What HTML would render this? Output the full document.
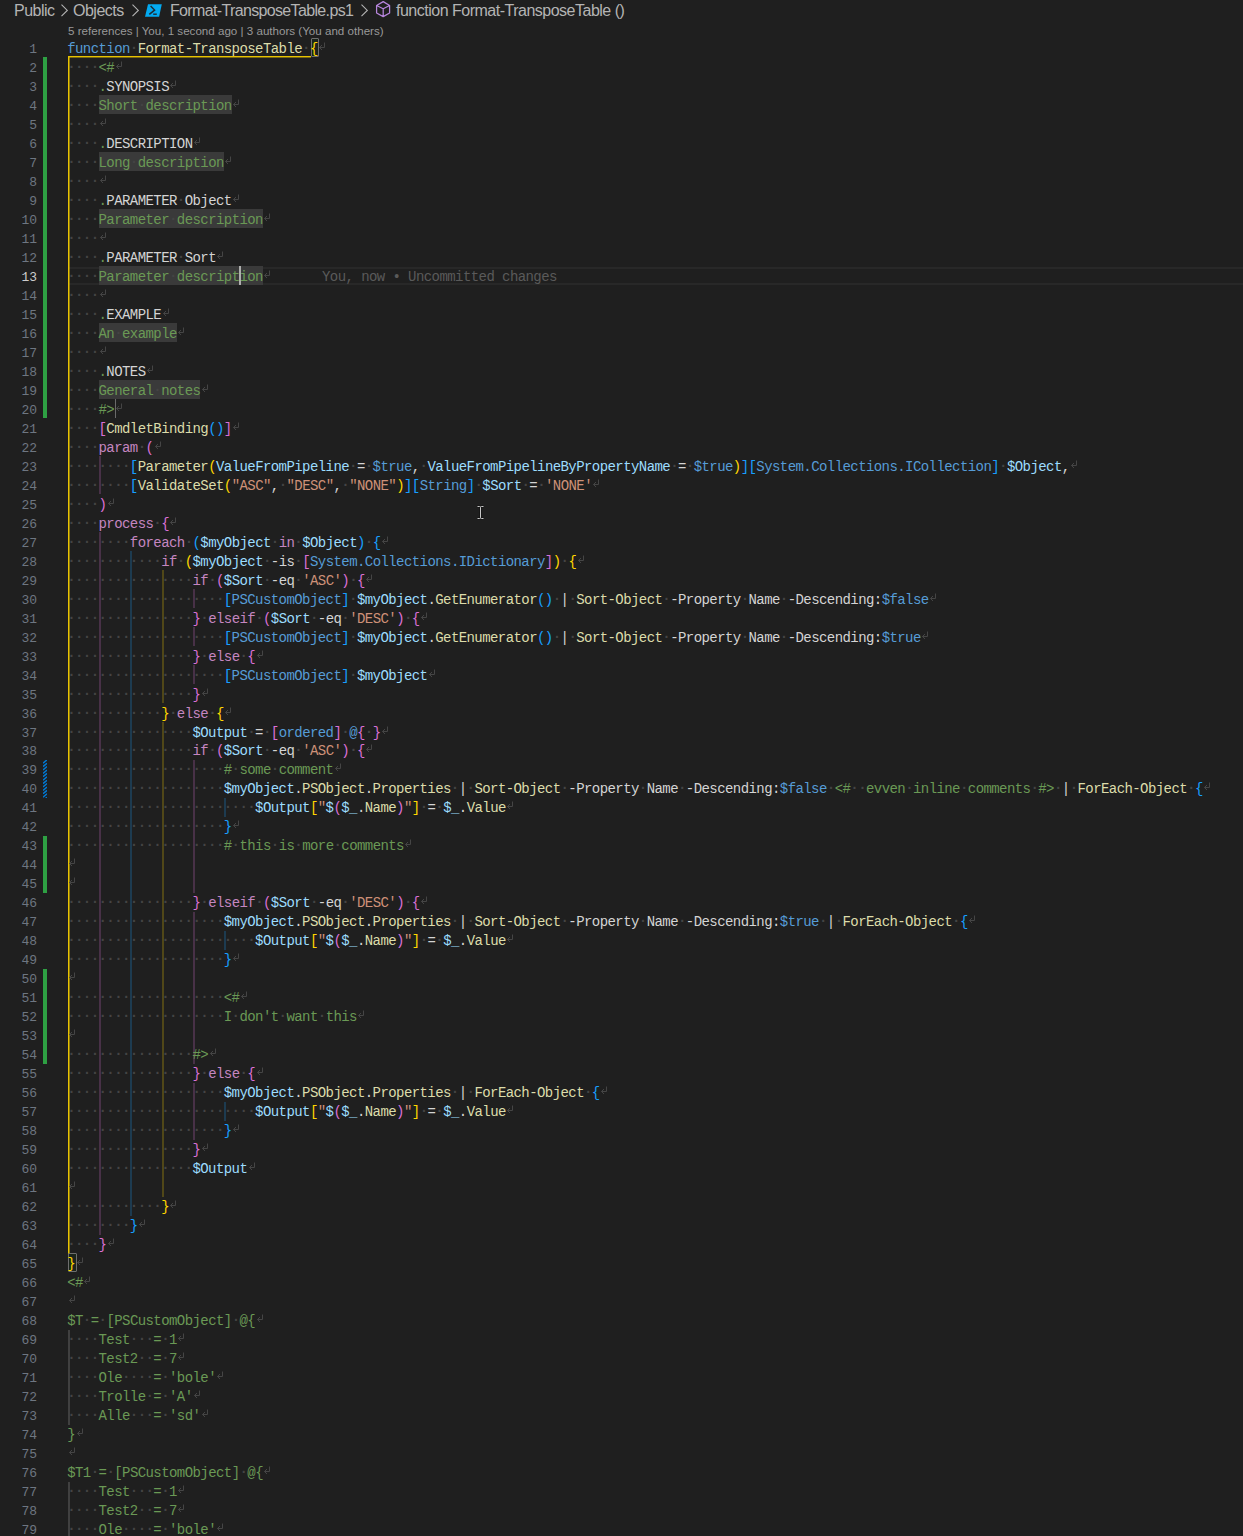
<!DOCTYPE html><html><head><meta charset="utf-8"><style>
html,body{margin:0;padding:0;background:#1F1F1F;width:1243px;height:1536px;overflow:hidden;position:relative}
body{font-family:"Liberation Mono",monospace}
.bc{position:absolute;top:0;left:0;height:22px;font-family:"Liberation Sans",sans-serif;font-size:16px;letter-spacing:-0.5px;color:#B4B4B4;white-space:pre}
.bc span{position:absolute;top:2px}
.bc svg{position:absolute}
.lens{position:absolute;top:23px;left:68px;font-family:"Liberation Sans",sans-serif;font-size:11.6px;color:#999999;white-space:pre;line-height:16px}
.ln{position:absolute;left:0;width:37px;text-align:right;font-size:13px;line-height:19px;height:19px;color:#6E7681;letter-spacing:0px;padding-top:2px;box-sizing:border-box}
.ln.act{color:#CCCCCC}
.g{position:absolute;left:43px;width:4px}
.g.add{background:#2EA043}
.gm{position:absolute;left:43px}
.g.mod{background:repeating-linear-gradient(-45deg,#0078D4 0px,#0078D4 1.5px,#1F1F1F 1.5px,#1F1F1F 2.4px)}
.cur{position:absolute;left:68px;right:0;height:18px;box-sizing:border-box;border-top:2px solid #282828;border-bottom:2px solid #282828}
.hl{position:absolute;height:19px;background:#3A3A3A}
.gd{position:absolute;width:2px}
.gda{position:absolute;left:68px;width:2px;background:linear-gradient(90deg,#E8C300 0,#E8C300 1px,rgba(232,195,0,0.55) 1px)}
.gdh{position:absolute;left:68px;height:2px;background:linear-gradient(180deg,#E8C300 0,#E8C300 1px,rgba(232,195,0,0.45) 1px)}
.bm{position:absolute;height:19px;box-sizing:border-box;border:1px solid #6E6E6E;border-radius:1px;background:rgba(0,100,0,0.1)}
.l{position:absolute;left:67.2px;height:19px;line-height:19px;font-size:14px;white-space:pre;letter-spacing:-0.5728px;padding-top:2px;box-sizing:border-box;color:#D4D4D4}
.l s,.l b,.l i{text-decoration:none;font-weight:normal;font-style:normal}
.l i{color:#444444;position:relative;top:-1px;font-weight:bold !important}
.kw{color:#C586C0}.fn{color:#569CD6}.name{color:#DCDCAA}.var{color:#9CDCFE}.const{color:#569CD6}
.str{color:#CE9178}.com{color:#6A9955}.type{color:#569CD6}.df{color:#D4D4D4}.attr{color:#DCDCAA}.mem{color:#DCDCAA}.prop{color:#9CDCFE}
.eol{position:absolute;fill:none;stroke:#454545;stroke-width:1}
.blame{position:absolute;height:19px;line-height:19px;font-size:14px;letter-spacing:-0.5728px;color:#5A5A5A;white-space:pre;padding-top:2px;box-sizing:border-box}
.caret{position:absolute;width:2px;height:19px;background:#AEAFAD}
.ibeam{position:absolute}
.caret2{position:absolute;width:1px;height:19px;background:#6A6A6A}
</style></head><body><div class="bc">
<span style="left:14px">Public</span>
<svg style="left:60px;top:3px" width="10" height="15"><path d="M1.5 1.6L7.3 7.4L1.5 13.1" stroke="#B4B4B4" stroke-width="1.1" fill="none"/></svg>
<span style="left:73px">Objects</span>
<svg style="left:131px;top:3px" width="10" height="15"><path d="M1.5 1.6L7.3 7.4L1.5 13.1" stroke="#B4B4B4" stroke-width="1.1" fill="none"/></svg>
<svg style="left:144px;top:4px" width="19" height="13"><path d="M4 0.2H17.8L15.1 12.7H1Z" fill="#03A9F0"/><path d="M6.6 1.9L10.6 6.1L5.3 10.4" stroke="#1F2A33" stroke-width="1.5" fill="none"/><path d="M9.2 10.2H12.8" stroke="#1F2A33" stroke-width="1.4"/></svg>
<span style="left:170px;letter-spacing:-0.65px">Format-TransposeTable.ps1</span>
<svg style="left:360px;top:3px" width="10" height="15"><path d="M1.5 1.6L7.3 7.4L1.5 13.1" stroke="#B4B4B4" stroke-width="1.1" fill="none"/></svg>
<svg style="left:375px;top:0px" width="17" height="19"><path d="M8.2 1.6L14.6 5.5V13L8.2 16.6L1.6 13V5.5Z M1.6 5.5L8.2 8.8L14.6 5.5 M8.2 8.8V16.6" stroke="#B886DE" stroke-width="1.25" fill="none" stroke-linejoin="round"/></svg>
<span style="left:396px">function Format-TransposeTable ()</span>
</div>
<div class="lens">5 references | You, 1 second ago | 3 authors (You and others)</div>
<div class="ln" style="top:38px">1</div>
<div class="ln" style="top:57px">2</div>
<div class="ln" style="top:76px">3</div>
<div class="ln" style="top:95px">4</div>
<div class="ln" style="top:114px">5</div>
<div class="ln" style="top:133px">6</div>
<div class="ln" style="top:152px">7</div>
<div class="ln" style="top:171px">8</div>
<div class="ln" style="top:190px">9</div>
<div class="ln" style="top:209px">10</div>
<div class="ln" style="top:228px">11</div>
<div class="ln" style="top:247px">12</div>
<div class="ln act" style="top:266px">13</div>
<div class="ln" style="top:285px">14</div>
<div class="ln" style="top:304px">15</div>
<div class="ln" style="top:323px">16</div>
<div class="ln" style="top:342px">17</div>
<div class="ln" style="top:361px">18</div>
<div class="ln" style="top:380px">19</div>
<div class="ln" style="top:399px">20</div>
<div class="ln" style="top:418px">21</div>
<div class="ln" style="top:437px">22</div>
<div class="ln" style="top:456px">23</div>
<div class="ln" style="top:475px">24</div>
<div class="ln" style="top:494px">25</div>
<div class="ln" style="top:513px">26</div>
<div class="ln" style="top:532px">27</div>
<div class="ln" style="top:551px">28</div>
<div class="ln" style="top:570px">29</div>
<div class="ln" style="top:589px">30</div>
<div class="ln" style="top:608px">31</div>
<div class="ln" style="top:627px">32</div>
<div class="ln" style="top:646px">33</div>
<div class="ln" style="top:665px">34</div>
<div class="ln" style="top:684px">35</div>
<div class="ln" style="top:703px">36</div>
<div class="ln" style="top:722px">37</div>
<div class="ln" style="top:740px">38</div>
<div class="ln" style="top:759px">39</div>
<div class="ln" style="top:778px">40</div>
<div class="ln" style="top:797px">41</div>
<div class="ln" style="top:816px">42</div>
<div class="ln" style="top:835px">43</div>
<div class="ln" style="top:854px">44</div>
<div class="ln" style="top:873px">45</div>
<div class="ln" style="top:892px">46</div>
<div class="ln" style="top:911px">47</div>
<div class="ln" style="top:930px">48</div>
<div class="ln" style="top:949px">49</div>
<div class="ln" style="top:968px">50</div>
<div class="ln" style="top:987px">51</div>
<div class="ln" style="top:1006px">52</div>
<div class="ln" style="top:1025px">53</div>
<div class="ln" style="top:1044px">54</div>
<div class="ln" style="top:1063px">55</div>
<div class="ln" style="top:1082px">56</div>
<div class="ln" style="top:1101px">57</div>
<div class="ln" style="top:1120px">58</div>
<div class="ln" style="top:1139px">59</div>
<div class="ln" style="top:1158px">60</div>
<div class="ln" style="top:1177px">61</div>
<div class="ln" style="top:1196px">62</div>
<div class="ln" style="top:1215px">63</div>
<div class="ln" style="top:1234px">64</div>
<div class="ln" style="top:1253px">65</div>
<div class="ln" style="top:1272px">66</div>
<div class="ln" style="top:1291px">67</div>
<div class="ln" style="top:1310px">68</div>
<div class="ln" style="top:1329px">69</div>
<div class="ln" style="top:1348px">70</div>
<div class="ln" style="top:1367px">71</div>
<div class="ln" style="top:1386px">72</div>
<div class="ln" style="top:1405px">73</div>
<div class="ln" style="top:1424px">74</div>
<div class="ln" style="top:1443px">75</div>
<div class="ln" style="top:1462px">76</div>
<div class="ln" style="top:1481px">77</div>
<div class="ln" style="top:1500px">78</div>
<div class="ln" style="top:1519px">79</div>
<div class="g add" style="top:57px;height:361px"></div>
<svg class="gm" style="top:760px" width="4" height="38"><path d="M0 3.20L4 -0.20M0 6.60L4 3.20M0 10.00L4 6.60M0 13.40L4 10.00M0 16.80L4 13.40M0 20.20L4 16.80M0 23.60L4 20.20M0 27.00L4 23.60M0 30.40L4 27.00M0 33.80L4 30.40M0 37.20L4 33.80M0 40.60L4 37.20M0 44.00L4 40.60" stroke="#0078D4" stroke-width="1.5"/></svg>
<div class="g add" style="top:836px;height:57px"></div>
<div class="g add" style="top:969px;height:95px"></div>
<div class="cur" style="top:267px"></div>
<div class="hl" style="top:95px;left:98.51px;width:133.09px"></div>
<div class="hl" style="top:152px;left:98.51px;width:125.26px"></div>
<div class="hl" style="top:209px;left:98.51px;width:164.40px"></div>
<div class="hl" style="top:266px;left:98.51px;width:164.40px"></div>
<div class="hl" style="top:323px;left:98.51px;width:78.29px"></div>
<div class="hl" style="top:380px;left:98.51px;width:101.77px"></div>
<div class="gd" style="top:456px;left:99px;height:38px;background:rgba(218,112,214,0.22)"></div>
<div class="gd" style="top:589px;left:193px;height:19px;background:rgba(218,112,214,0.22)"></div>
<div class="gd" style="top:627px;left:193px;height:19px;background:rgba(218,112,214,0.22)"></div>
<div class="gd" style="top:665px;left:193px;height:19px;background:rgba(218,112,214,0.22)"></div>
<div class="gd" style="top:570px;left:162px;height:133px;background:rgba(255,215,0,0.22)"></div>
<div class="gd" style="top:798px;left:224px;height:19px;background:rgba(23,159,255,0.22)"></div>
<div class="gd" style="top:760px;left:193px;height:133px;background:rgba(218,112,214,0.22)"></div>
<div class="gd" style="top:931px;left:224px;height:19px;background:rgba(23,159,255,0.22)"></div>
<div class="gd" style="top:912px;left:193px;height:152px;background:rgba(218,112,214,0.22)"></div>
<div class="gd" style="top:1102px;left:224px;height:19px;background:rgba(23,159,255,0.22)"></div>
<div class="gd" style="top:1083px;left:193px;height:57px;background:rgba(218,112,214,0.22)"></div>
<div class="gd" style="top:722px;left:162px;height:475px;background:rgba(255,215,0,0.22)"></div>
<div class="gd" style="top:551px;left:130px;height:665px;background:rgba(23,159,255,0.22)"></div>
<div class="gd" style="top:532px;left:99px;height:703px;background:rgba(218,112,214,0.22)"></div>
<div class="gda" style="top:57px;height:1197px"></div>
<div class="gdh" style="top:56px;width:242.69px"></div>
<div class="gd" style="top:1330px;left:68px;height:95px;background:#404040"></div>
<div class="gd" style="top:1482px;left:68px;height:57px;background:#404040"></div>
<div class="bm" style="top:38px;left:310.89px;width:8.6px"></div>
<div class="bm" style="top:1253px;left:68.20px;width:8.6px"></div>
<div class="l" style="top:38px"><s class="fn">function</s><i>·</i><s class="name">Format-TransposeTable</s><i>·</i><b style="color:#FFD700">{</b></div>
<svg class="eol" style="top:38px;left:317.00px" width="9" height="19"><path d="M7.5 4.5V9.5H2.5M5 7L2.5 9.5L5 12"/></svg>
<div class="l" style="top:57px"><i>····</i><s class="com">&lt;#</s></div>
<svg class="eol" style="top:57px;left:114.00px" width="9" height="19"><path d="M7.5 4.5V9.5H2.5M5 7L2.5 9.5L5 12"/></svg>
<div class="l" style="top:76px"><i>····</i><s class="com">.</s><s class="df">SYNOPSIS</s></div>
<svg class="eol" style="top:76px;left:168.00px" width="9" height="19"><path d="M7.5 4.5V9.5H2.5M5 7L2.5 9.5L5 12"/></svg>
<div class="l" style="top:95px"><i>····</i><s class="com">Short</s><i>·</i><s class="com">description</s></div>
<svg class="eol" style="top:95px;left:231.00px" width="9" height="19"><path d="M7.5 4.5V9.5H2.5M5 7L2.5 9.5L5 12"/></svg>
<div class="l" style="top:114px"><i>····</i></div>
<svg class="eol" style="top:114px;left:98.00px" width="9" height="19"><path d="M7.5 4.5V9.5H2.5M5 7L2.5 9.5L5 12"/></svg>
<div class="l" style="top:133px"><i>····</i><s class="com">.</s><s class="df">DESCRIPTION</s></div>
<svg class="eol" style="top:133px;left:192.00px" width="9" height="19"><path d="M7.5 4.5V9.5H2.5M5 7L2.5 9.5L5 12"/></svg>
<div class="l" style="top:152px"><i>····</i><s class="com">Long</s><i>·</i><s class="com">description</s></div>
<svg class="eol" style="top:152px;left:223.00px" width="9" height="19"><path d="M7.5 4.5V9.5H2.5M5 7L2.5 9.5L5 12"/></svg>
<div class="l" style="top:171px"><i>····</i></div>
<svg class="eol" style="top:171px;left:98.00px" width="9" height="19"><path d="M7.5 4.5V9.5H2.5M5 7L2.5 9.5L5 12"/></svg>
<div class="l" style="top:190px"><i>····</i><s class="com">.</s><s class="df">PARAMETER</s><i>·</i><s class="df">Object</s></div>
<svg class="eol" style="top:190px;left:231.00px" width="9" height="19"><path d="M7.5 4.5V9.5H2.5M5 7L2.5 9.5L5 12"/></svg>
<div class="l" style="top:209px"><i>····</i><s class="com">Parameter</s><i>·</i><s class="com">description</s></div>
<svg class="eol" style="top:209px;left:262.00px" width="9" height="19"><path d="M7.5 4.5V9.5H2.5M5 7L2.5 9.5L5 12"/></svg>
<div class="l" style="top:228px"><i>····</i></div>
<svg class="eol" style="top:228px;left:98.00px" width="9" height="19"><path d="M7.5 4.5V9.5H2.5M5 7L2.5 9.5L5 12"/></svg>
<div class="l" style="top:247px"><i>····</i><s class="com">.</s><s class="df">PARAMETER</s><i>·</i><s class="df">Sort</s></div>
<svg class="eol" style="top:247px;left:215.00px" width="9" height="19"><path d="M7.5 4.5V9.5H2.5M5 7L2.5 9.5L5 12"/></svg>
<div class="l" style="top:266px"><i>····</i><s class="com">Parameter</s><i>·</i><s class="com">description</s></div>
<svg class="eol" style="top:266px;left:262.00px" width="9" height="19"><path d="M7.5 4.5V9.5H2.5M5 7L2.5 9.5L5 12"/></svg>
<div class="l" style="top:285px"><i>····</i></div>
<svg class="eol" style="top:285px;left:98.00px" width="9" height="19"><path d="M7.5 4.5V9.5H2.5M5 7L2.5 9.5L5 12"/></svg>
<div class="l" style="top:304px"><i>····</i><s class="com">.</s><s class="df">EXAMPLE</s></div>
<svg class="eol" style="top:304px;left:161.00px" width="9" height="19"><path d="M7.5 4.5V9.5H2.5M5 7L2.5 9.5L5 12"/></svg>
<div class="l" style="top:323px"><i>····</i><s class="com">An</s><i>·</i><s class="com">example</s></div>
<svg class="eol" style="top:323px;left:176.00px" width="9" height="19"><path d="M7.5 4.5V9.5H2.5M5 7L2.5 9.5L5 12"/></svg>
<div class="l" style="top:342px"><i>····</i></div>
<svg class="eol" style="top:342px;left:98.00px" width="9" height="19"><path d="M7.5 4.5V9.5H2.5M5 7L2.5 9.5L5 12"/></svg>
<div class="l" style="top:361px"><i>····</i><s class="com">.</s><s class="df">NOTES</s></div>
<svg class="eol" style="top:361px;left:145.00px" width="9" height="19"><path d="M7.5 4.5V9.5H2.5M5 7L2.5 9.5L5 12"/></svg>
<div class="l" style="top:380px"><i>····</i><s class="com">General</s><i>·</i><s class="com">notes</s></div>
<svg class="eol" style="top:380px;left:200.00px" width="9" height="19"><path d="M7.5 4.5V9.5H2.5M5 7L2.5 9.5L5 12"/></svg>
<div class="l" style="top:399px"><i>····</i><s class="com">#&gt;</s></div>
<svg class="eol" style="top:399px;left:114.00px" width="9" height="19"><path d="M7.5 4.5V9.5H2.5M5 7L2.5 9.5L5 12"/></svg>
<div class="l" style="top:418px"><i>····</i><b style="color:#DA70D6">[</b><s class="attr">CmdletBinding</s><b style="color:#179FFF">(</b><b style="color:#179FFF">)</b><b style="color:#DA70D6">]</b></div>
<svg class="eol" style="top:418px;left:231.00px" width="9" height="19"><path d="M7.5 4.5V9.5H2.5M5 7L2.5 9.5L5 12"/></svg>
<div class="l" style="top:437px"><i>····</i><s class="kw">param</s><i>·</i><b style="color:#DA70D6">(</b></div>
<svg class="eol" style="top:437px;left:153.00px" width="9" height="19"><path d="M7.5 4.5V9.5H2.5M5 7L2.5 9.5L5 12"/></svg>
<div class="l" style="top:456px"><i>········</i><b style="color:#179FFF">[</b><s class="attr">Parameter</s><b style="color:#FFD700">(</b><s class="prop">ValueFromPipeline</s><i>·</i><s class="df">=</s><i>·</i><s class="const">$true</s><s class="df">,</s><i>·</i><s class="prop">ValueFromPipelineByPropertyName</s><i>·</i><s class="df">=</s><i>·</i><s class="const">$true</s><b style="color:#FFD700">)</b><b style="color:#179FFF">]</b><b style="color:#179FFF">[</b><s class="type">System.Collections.ICollection</s><b style="color:#179FFF">]</b><i>·</i><s class="var">$Object</s><s class="df">,</s></div>
<svg class="eol" style="top:456px;left:1069.00px" width="9" height="19"><path d="M7.5 4.5V9.5H2.5M5 7L2.5 9.5L5 12"/></svg>
<div class="l" style="top:475px"><i>········</i><b style="color:#179FFF">[</b><s class="attr">ValidateSet</s><b style="color:#FFD700">(</b><s class="str">&quot;ASC&quot;</s><s class="df">,</s><i>·</i><s class="str">&quot;DESC&quot;</s><s class="df">,</s><i>·</i><s class="str">&quot;NONE&quot;</s><b style="color:#FFD700">)</b><b style="color:#179FFF">]</b><b style="color:#179FFF">[</b><s class="type">String</s><b style="color:#179FFF">]</b><i>·</i><s class="var">$Sort</s><i>·</i><s class="df">=</s><i>·</i><s class="str">&#x27;NONE&#x27;</s></div>
<svg class="eol" style="top:475px;left:591.00px" width="9" height="19"><path d="M7.5 4.5V9.5H2.5M5 7L2.5 9.5L5 12"/></svg>
<div class="l" style="top:494px"><i>····</i><b style="color:#DA70D6">)</b></div>
<svg class="eol" style="top:494px;left:106.00px" width="9" height="19"><path d="M7.5 4.5V9.5H2.5M5 7L2.5 9.5L5 12"/></svg>
<div class="l" style="top:513px"><i>····</i><s class="kw">process</s><i>·</i><b style="color:#DA70D6">{</b></div>
<svg class="eol" style="top:513px;left:168.00px" width="9" height="19"><path d="M7.5 4.5V9.5H2.5M5 7L2.5 9.5L5 12"/></svg>
<div class="l" style="top:532px"><i>········</i><s class="kw">foreach</s><i>·</i><b style="color:#179FFF">(</b><s class="var">$myObject</s><i>·</i><s class="kw">in</s><i>·</i><s class="var">$Object</s><b style="color:#179FFF">)</b><i>·</i><b style="color:#179FFF">{</b></div>
<svg class="eol" style="top:532px;left:380.00px" width="9" height="19"><path d="M7.5 4.5V9.5H2.5M5 7L2.5 9.5L5 12"/></svg>
<div class="l" style="top:551px"><i>············</i><s class="kw">if</s><i>·</i><b style="color:#FFD700">(</b><s class="var">$myObject</s><i>·</i><s class="df">-is</s><i>·</i><b style="color:#DA70D6">[</b><s class="type">System.Collections.IDictionary</s><b style="color:#DA70D6">]</b><b style="color:#FFD700">)</b><i>·</i><b style="color:#FFD700">{</b></div>
<svg class="eol" style="top:551px;left:576.00px" width="9" height="19"><path d="M7.5 4.5V9.5H2.5M5 7L2.5 9.5L5 12"/></svg>
<div class="l" style="top:570px"><i>················</i><s class="kw">if</s><i>·</i><b style="color:#DA70D6">(</b><s class="var">$Sort</s><i>·</i><s class="df">-eq</s><i>·</i><s class="str">&#x27;ASC&#x27;</s><b style="color:#DA70D6">)</b><i>·</i><b style="color:#DA70D6">{</b></div>
<svg class="eol" style="top:570px;left:364.00px" width="9" height="19"><path d="M7.5 4.5V9.5H2.5M5 7L2.5 9.5L5 12"/></svg>
<div class="l" style="top:589px"><i>····················</i><b style="color:#179FFF">[</b><s class="type">PSCustomObject</s><b style="color:#179FFF">]</b><i>·</i><s class="var">$myObject</s><s class="df">.</s><s class="mem">GetEnumerator</s><b style="color:#179FFF">(</b><b style="color:#179FFF">)</b><i>·</i><s class="df">|</s><i>·</i><s class="name">Sort-Object</s><i>·</i><s class="df">-Property</s><i>·</i><s class="df">Name</s><i>·</i><s class="df">-Descending:</s><s class="const">$false</s></div>
<svg class="eol" style="top:589px;left:928.00px" width="9" height="19"><path d="M7.5 4.5V9.5H2.5M5 7L2.5 9.5L5 12"/></svg>
<div class="l" style="top:608px"><i>················</i><b style="color:#DA70D6">}</b><i>·</i><s class="kw">elseif</s><i>·</i><b style="color:#DA70D6">(</b><s class="var">$Sort</s><i>·</i><s class="df">-eq</s><i>·</i><s class="str">&#x27;DESC&#x27;</s><b style="color:#DA70D6">)</b><i>·</i><b style="color:#DA70D6">{</b></div>
<svg class="eol" style="top:608px;left:419.00px" width="9" height="19"><path d="M7.5 4.5V9.5H2.5M5 7L2.5 9.5L5 12"/></svg>
<div class="l" style="top:627px"><i>····················</i><b style="color:#179FFF">[</b><s class="type">PSCustomObject</s><b style="color:#179FFF">]</b><i>·</i><s class="var">$myObject</s><s class="df">.</s><s class="mem">GetEnumerator</s><b style="color:#179FFF">(</b><b style="color:#179FFF">)</b><i>·</i><s class="df">|</s><i>·</i><s class="name">Sort-Object</s><i>·</i><s class="df">-Property</s><i>·</i><s class="df">Name</s><i>·</i><s class="df">-Descending:</s><s class="const">$true</s></div>
<svg class="eol" style="top:627px;left:920.00px" width="9" height="19"><path d="M7.5 4.5V9.5H2.5M5 7L2.5 9.5L5 12"/></svg>
<div class="l" style="top:646px"><i>················</i><b style="color:#DA70D6">}</b><i>·</i><s class="kw">else</s><i>·</i><b style="color:#DA70D6">{</b></div>
<svg class="eol" style="top:646px;left:255.00px" width="9" height="19"><path d="M7.5 4.5V9.5H2.5M5 7L2.5 9.5L5 12"/></svg>
<div class="l" style="top:665px"><i>····················</i><b style="color:#179FFF">[</b><s class="type">PSCustomObject</s><b style="color:#179FFF">]</b><i>·</i><s class="var">$myObject</s></div>
<svg class="eol" style="top:665px;left:427.00px" width="9" height="19"><path d="M7.5 4.5V9.5H2.5M5 7L2.5 9.5L5 12"/></svg>
<div class="l" style="top:684px"><i>················</i><b style="color:#DA70D6">}</b></div>
<svg class="eol" style="top:684px;left:200.00px" width="9" height="19"><path d="M7.5 4.5V9.5H2.5M5 7L2.5 9.5L5 12"/></svg>
<div class="l" style="top:703px"><i>············</i><b style="color:#FFD700">}</b><i>·</i><s class="kw">else</s><i>·</i><b style="color:#FFD700">{</b></div>
<svg class="eol" style="top:703px;left:223.00px" width="9" height="19"><path d="M7.5 4.5V9.5H2.5M5 7L2.5 9.5L5 12"/></svg>
<div class="l" style="top:722px"><i>················</i><s class="var">$Output</s><i>·</i><s class="df">=</s><i>·</i><b style="color:#DA70D6">[</b><s class="type">ordered</s><b style="color:#DA70D6">]</b><i>·</i><s class="const">@</s><b style="color:#DA70D6">{</b><i>·</i><b style="color:#DA70D6">}</b></div>
<svg class="eol" style="top:722px;left:380.00px" width="9" height="19"><path d="M7.5 4.5V9.5H2.5M5 7L2.5 9.5L5 12"/></svg>
<div class="l" style="top:740px"><i>················</i><s class="kw">if</s><i>·</i><b style="color:#DA70D6">(</b><s class="var">$Sort</s><i>·</i><s class="df">-eq</s><i>·</i><s class="str">&#x27;ASC&#x27;</s><b style="color:#DA70D6">)</b><i>·</i><b style="color:#DA70D6">{</b></div>
<svg class="eol" style="top:740px;left:364.00px" width="9" height="19"><path d="M7.5 4.5V9.5H2.5M5 7L2.5 9.5L5 12"/></svg>
<div class="l" style="top:759px"><i>····················</i><s class="com">#</s><i>·</i><s class="com">some</s><i>·</i><s class="com">comment</s></div>
<svg class="eol" style="top:759px;left:333.00px" width="9" height="19"><path d="M7.5 4.5V9.5H2.5M5 7L2.5 9.5L5 12"/></svg>
<div class="l" style="top:778px"><i>····················</i><s class="var">$myObject</s><s class="df">.</s><s class="mem">PSObject</s><s class="df">.</s><s class="mem">Properties</s><i>·</i><s class="df">|</s><i>·</i><s class="name">Sort-Object</s><i>·</i><s class="df">-Property</s><i>·</i><s class="df">Name</s><i>·</i><s class="df">-Descending:</s><s class="const">$false</s><i>·</i><s class="com">&lt;#</s><i>··</i><s class="com">evven</s><i>·</i><s class="com">inline</s><i>·</i><s class="com">comments</s><i>·</i><s class="com">#&gt;</s><i>·</i><s class="df">|</s><i>·</i><s class="name">ForEach-Object</s><i>·</i><b style="color:#179FFF">{</b></div>
<svg class="eol" style="top:778px;left:1202.00px" width="9" height="19"><path d="M7.5 4.5V9.5H2.5M5 7L2.5 9.5L5 12"/></svg>
<div class="l" style="top:797px"><i>························</i><s class="var">$Output</s><b style="color:#FFD700">[</b><s class="str">&quot;</s><s class="var">$</s><b style="color:#DA70D6">(</b><s class="var">$_</s><s class="df">.</s><s class="mem">Name</s><b style="color:#DA70D6">)</b><s class="str">&quot;</s><b style="color:#FFD700">]</b><i>·</i><s class="df">=</s><i>·</i><s class="var">$_</s><s class="df">.</s><s class="mem">Value</s></div>
<svg class="eol" style="top:797px;left:505.00px" width="9" height="19"><path d="M7.5 4.5V9.5H2.5M5 7L2.5 9.5L5 12"/></svg>
<div class="l" style="top:816px"><i>····················</i><b style="color:#179FFF">}</b></div>
<svg class="eol" style="top:816px;left:231.00px" width="9" height="19"><path d="M7.5 4.5V9.5H2.5M5 7L2.5 9.5L5 12"/></svg>
<div class="l" style="top:835px"><i>····················</i><s class="com">#</s><i>·</i><s class="com">this</s><i>·</i><s class="com">is</s><i>·</i><s class="com">more</s><i>·</i><s class="com">comments</s></div>
<svg class="eol" style="top:835px;left:403.00px" width="9" height="19"><path d="M7.5 4.5V9.5H2.5M5 7L2.5 9.5L5 12"/></svg>
<div class="l" style="top:854px"></div>
<svg class="eol" style="top:854px;left:67.00px" width="9" height="19"><path d="M7.5 4.5V9.5H2.5M5 7L2.5 9.5L5 12"/></svg>
<div class="l" style="top:873px"></div>
<svg class="eol" style="top:873px;left:67.00px" width="9" height="19"><path d="M7.5 4.5V9.5H2.5M5 7L2.5 9.5L5 12"/></svg>
<div class="l" style="top:892px"><i>················</i><b style="color:#DA70D6">}</b><i>·</i><s class="kw">elseif</s><i>·</i><b style="color:#DA70D6">(</b><s class="var">$Sort</s><i>·</i><s class="df">-eq</s><i>·</i><s class="str">&#x27;DESC&#x27;</s><b style="color:#DA70D6">)</b><i>·</i><b style="color:#DA70D6">{</b></div>
<svg class="eol" style="top:892px;left:419.00px" width="9" height="19"><path d="M7.5 4.5V9.5H2.5M5 7L2.5 9.5L5 12"/></svg>
<div class="l" style="top:911px"><i>····················</i><s class="var">$myObject</s><s class="df">.</s><s class="mem">PSObject</s><s class="df">.</s><s class="mem">Properties</s><i>·</i><s class="df">|</s><i>·</i><s class="name">Sort-Object</s><i>·</i><s class="df">-Property</s><i>·</i><s class="df">Name</s><i>·</i><s class="df">-Descending:</s><s class="const">$true</s><i>·</i><s class="df">|</s><i>·</i><s class="name">ForEach-Object</s><i>·</i><b style="color:#179FFF">{</b></div>
<svg class="eol" style="top:911px;left:967.00px" width="9" height="19"><path d="M7.5 4.5V9.5H2.5M5 7L2.5 9.5L5 12"/></svg>
<div class="l" style="top:930px"><i>························</i><s class="var">$Output</s><b style="color:#FFD700">[</b><s class="str">&quot;</s><s class="var">$</s><b style="color:#DA70D6">(</b><s class="var">$_</s><s class="df">.</s><s class="mem">Name</s><b style="color:#DA70D6">)</b><s class="str">&quot;</s><b style="color:#FFD700">]</b><i>·</i><s class="df">=</s><i>·</i><s class="var">$_</s><s class="df">.</s><s class="mem">Value</s></div>
<svg class="eol" style="top:930px;left:505.00px" width="9" height="19"><path d="M7.5 4.5V9.5H2.5M5 7L2.5 9.5L5 12"/></svg>
<div class="l" style="top:949px"><i>····················</i><b style="color:#179FFF">}</b></div>
<svg class="eol" style="top:949px;left:231.00px" width="9" height="19"><path d="M7.5 4.5V9.5H2.5M5 7L2.5 9.5L5 12"/></svg>
<div class="l" style="top:968px"></div>
<svg class="eol" style="top:968px;left:67.00px" width="9" height="19"><path d="M7.5 4.5V9.5H2.5M5 7L2.5 9.5L5 12"/></svg>
<div class="l" style="top:987px"><i>····················</i><s class="com">&lt;#</s></div>
<svg class="eol" style="top:987px;left:239.00px" width="9" height="19"><path d="M7.5 4.5V9.5H2.5M5 7L2.5 9.5L5 12"/></svg>
<div class="l" style="top:1006px"><i>····················</i><s class="com">I</s><i>·</i><s class="com">don&#x27;t</s><i>·</i><s class="com">want</s><i>·</i><s class="com">this</s></div>
<svg class="eol" style="top:1006px;left:356.00px" width="9" height="19"><path d="M7.5 4.5V9.5H2.5M5 7L2.5 9.5L5 12"/></svg>
<div class="l" style="top:1025px"></div>
<svg class="eol" style="top:1025px;left:67.00px" width="9" height="19"><path d="M7.5 4.5V9.5H2.5M5 7L2.5 9.5L5 12"/></svg>
<div class="l" style="top:1044px"><i>················</i><s class="com">#&gt;</s></div>
<svg class="eol" style="top:1044px;left:208.00px" width="9" height="19"><path d="M7.5 4.5V9.5H2.5M5 7L2.5 9.5L5 12"/></svg>
<div class="l" style="top:1063px"><i>················</i><b style="color:#DA70D6">}</b><i>·</i><s class="kw">else</s><i>·</i><b style="color:#DA70D6">{</b></div>
<svg class="eol" style="top:1063px;left:255.00px" width="9" height="19"><path d="M7.5 4.5V9.5H2.5M5 7L2.5 9.5L5 12"/></svg>
<div class="l" style="top:1082px"><i>····················</i><s class="var">$myObject</s><s class="df">.</s><s class="mem">PSObject</s><s class="df">.</s><s class="mem">Properties</s><i>·</i><s class="df">|</s><i>·</i><s class="name">ForEach-Object</s><i>·</i><b style="color:#179FFF">{</b></div>
<svg class="eol" style="top:1082px;left:599.00px" width="9" height="19"><path d="M7.5 4.5V9.5H2.5M5 7L2.5 9.5L5 12"/></svg>
<div class="l" style="top:1101px"><i>························</i><s class="var">$Output</s><b style="color:#FFD700">[</b><s class="str">&quot;</s><s class="var">$</s><b style="color:#DA70D6">(</b><s class="var">$_</s><s class="df">.</s><s class="mem">Name</s><b style="color:#DA70D6">)</b><s class="str">&quot;</s><b style="color:#FFD700">]</b><i>·</i><s class="df">=</s><i>·</i><s class="var">$_</s><s class="df">.</s><s class="mem">Value</s></div>
<svg class="eol" style="top:1101px;left:505.00px" width="9" height="19"><path d="M7.5 4.5V9.5H2.5M5 7L2.5 9.5L5 12"/></svg>
<div class="l" style="top:1120px"><i>····················</i><b style="color:#179FFF">}</b></div>
<svg class="eol" style="top:1120px;left:231.00px" width="9" height="19"><path d="M7.5 4.5V9.5H2.5M5 7L2.5 9.5L5 12"/></svg>
<div class="l" style="top:1139px"><i>················</i><b style="color:#DA70D6">}</b></div>
<svg class="eol" style="top:1139px;left:200.00px" width="9" height="19"><path d="M7.5 4.5V9.5H2.5M5 7L2.5 9.5L5 12"/></svg>
<div class="l" style="top:1158px"><i>················</i><s class="var">$Output</s></div>
<svg class="eol" style="top:1158px;left:247.00px" width="9" height="19"><path d="M7.5 4.5V9.5H2.5M5 7L2.5 9.5L5 12"/></svg>
<div class="l" style="top:1177px"></div>
<svg class="eol" style="top:1177px;left:67.00px" width="9" height="19"><path d="M7.5 4.5V9.5H2.5M5 7L2.5 9.5L5 12"/></svg>
<div class="l" style="top:1196px"><i>············</i><b style="color:#FFD700">}</b></div>
<svg class="eol" style="top:1196px;left:168.00px" width="9" height="19"><path d="M7.5 4.5V9.5H2.5M5 7L2.5 9.5L5 12"/></svg>
<div class="l" style="top:1215px"><i>········</i><b style="color:#179FFF">}</b></div>
<svg class="eol" style="top:1215px;left:137.00px" width="9" height="19"><path d="M7.5 4.5V9.5H2.5M5 7L2.5 9.5L5 12"/></svg>
<div class="l" style="top:1234px"><i>····</i><b style="color:#DA70D6">}</b></div>
<svg class="eol" style="top:1234px;left:106.00px" width="9" height="19"><path d="M7.5 4.5V9.5H2.5M5 7L2.5 9.5L5 12"/></svg>
<div class="l" style="top:1253px"><b style="color:#FFD700">}</b></div>
<svg class="eol" style="top:1253px;left:75.00px" width="9" height="19"><path d="M7.5 4.5V9.5H2.5M5 7L2.5 9.5L5 12"/></svg>
<div class="l" style="top:1272px"><s class="com">&lt;#</s></div>
<svg class="eol" style="top:1272px;left:82.00px" width="9" height="19"><path d="M7.5 4.5V9.5H2.5M5 7L2.5 9.5L5 12"/></svg>
<div class="l" style="top:1291px"></div>
<svg class="eol" style="top:1291px;left:67.00px" width="9" height="19"><path d="M7.5 4.5V9.5H2.5M5 7L2.5 9.5L5 12"/></svg>
<div class="l" style="top:1310px"><s class="com">$T</s><i>·</i><s class="com">=</s><i>·</i><s class="com">[PSCustomObject]</s><i>·</i><s class="com">@{</s></div>
<svg class="eol" style="top:1310px;left:255.00px" width="9" height="19"><path d="M7.5 4.5V9.5H2.5M5 7L2.5 9.5L5 12"/></svg>
<div class="l" style="top:1329px"><i>····</i><s class="com">Test</s><i>···</i><s class="com">=</s><i>·</i><s class="com">1</s></div>
<svg class="eol" style="top:1329px;left:176.00px" width="9" height="19"><path d="M7.5 4.5V9.5H2.5M5 7L2.5 9.5L5 12"/></svg>
<div class="l" style="top:1348px"><i>····</i><s class="com">Test2</s><i>··</i><s class="com">=</s><i>·</i><s class="com">7</s></div>
<svg class="eol" style="top:1348px;left:176.00px" width="9" height="19"><path d="M7.5 4.5V9.5H2.5M5 7L2.5 9.5L5 12"/></svg>
<div class="l" style="top:1367px"><i>····</i><s class="com">Ole</s><i>····</i><s class="com">=</s><i>·</i><s class="com">&#x27;bole&#x27;</s></div>
<svg class="eol" style="top:1367px;left:215.00px" width="9" height="19"><path d="M7.5 4.5V9.5H2.5M5 7L2.5 9.5L5 12"/></svg>
<div class="l" style="top:1386px"><i>····</i><s class="com">Trolle</s><i>·</i><s class="com">=</s><i>·</i><s class="com">&#x27;A&#x27;</s></div>
<svg class="eol" style="top:1386px;left:192.00px" width="9" height="19"><path d="M7.5 4.5V9.5H2.5M5 7L2.5 9.5L5 12"/></svg>
<div class="l" style="top:1405px"><i>····</i><s class="com">Alle</s><i>···</i><s class="com">=</s><i>·</i><s class="com">&#x27;sd&#x27;</s></div>
<svg class="eol" style="top:1405px;left:200.00px" width="9" height="19"><path d="M7.5 4.5V9.5H2.5M5 7L2.5 9.5L5 12"/></svg>
<div class="l" style="top:1424px"><s class="com">}</s></div>
<svg class="eol" style="top:1424px;left:75.00px" width="9" height="19"><path d="M7.5 4.5V9.5H2.5M5 7L2.5 9.5L5 12"/></svg>
<div class="l" style="top:1443px"></div>
<svg class="eol" style="top:1443px;left:67.00px" width="9" height="19"><path d="M7.5 4.5V9.5H2.5M5 7L2.5 9.5L5 12"/></svg>
<div class="l" style="top:1462px"><s class="com">$T1</s><i>·</i><s class="com">=</s><i>·</i><s class="com">[PSCustomObject]</s><i>·</i><s class="com">@{</s></div>
<svg class="eol" style="top:1462px;left:262.00px" width="9" height="19"><path d="M7.5 4.5V9.5H2.5M5 7L2.5 9.5L5 12"/></svg>
<div class="l" style="top:1481px"><i>····</i><s class="com">Test</s><i>···</i><s class="com">=</s><i>·</i><s class="com">1</s></div>
<svg class="eol" style="top:1481px;left:176.00px" width="9" height="19"><path d="M7.5 4.5V9.5H2.5M5 7L2.5 9.5L5 12"/></svg>
<div class="l" style="top:1500px"><i>····</i><s class="com">Test2</s><i>··</i><s class="com">=</s><i>·</i><s class="com">7</s></div>
<svg class="eol" style="top:1500px;left:176.00px" width="9" height="19"><path d="M7.5 4.5V9.5H2.5M5 7L2.5 9.5L5 12"/></svg>
<div class="l" style="top:1519px"><i>····</i><s class="com">Ole</s><i>····</i><s class="com">=</s><i>·</i><s class="com">&#x27;bole&#x27;</s></div>
<svg class="eol" style="top:1519px;left:215.00px" width="9" height="19"><path d="M7.5 4.5V9.5H2.5M5 7L2.5 9.5L5 12"/></svg>
<div class="blame" style="top:266px;left:322.00px">You, now • Uncommitted changes</div>
<div class="caret" style="top:266px;left:239.43px"></div>
<div class="caret2" style="top:399px;left:115px"></div>
<svg class="ibeam" width="9" height="17" style="left:476px;top:504px"><path d="M1.5 2.5H3.5Q4.5 2.5 4.5 3.5V13.5Q4.5 14.5 3.5 14.5H1.5M7.5 2.5H5.5Q4.5 2.5 4.5 3.5M7.5 14.5H5.5Q4.5 14.5 4.5 13.5" stroke="#111" stroke-width="2.2" fill="none"/><path d="M1.5 2.5H3.5Q4.5 2.5 4.5 3.5V13.5Q4.5 14.5 3.5 14.5H1.5M7.5 2.5H5.5Q4.5 2.5 4.5 3.5M7.5 14.5H5.5Q4.5 14.5 4.5 13.5" stroke="#C8C8C8" stroke-width="1" fill="none"/></svg></body></html>
